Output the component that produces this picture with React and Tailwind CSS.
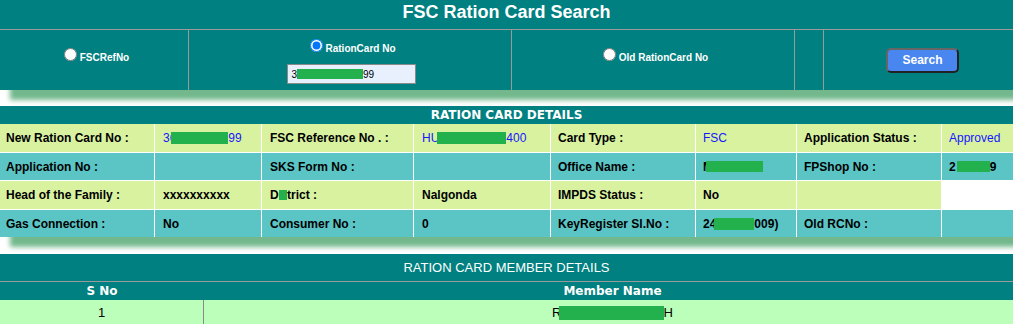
import React from "react";

const G = "bg-[#d8f2a0]";
const C = "bg-[#5bc5c6]";

function Cell({ bg, pad, children }) {
  return (
    <div className={`${bg} ${pad} flex items-center whitespace-nowrap text-[12px] text-black`}>
      {children}
    </div>
  );
}

function R({ className }) {
  return <span className={`inline-block bg-[#22b14c] align-middle ${className}`} />;
}

const P = ["pl-[6px]", "pl-[8px]", "pl-[8px]", "pl-[8px]", "pl-[7px]", "pl-[7px]", "pl-[7px]", "pl-[7px]"];

function Label({ children }) {
  return <span className="font-bold">{children}</span>;
}
function Blue({ children }) {
  return <span className="text-[#1616ff]">{children}</span>;
}
function Val({ children }) {
  return <span className="font-bold">{children}</span>;
}

export default function App() {
  return (
    <div className="w-[1013px] h-[324px] overflow-hidden bg-white font-['Liberation_Sans',Arial,sans-serif]">
      {/* Search panel */}
      <div className="bg-[#008080] shadow-[10px_10px_5px_#72b88c]">
        <div className="h-[30px] border-b border-[#9a9a9a] pt-[3px] text-center text-[18px] leading-[18px] font-bold text-white">
          FSC Ration Card Search
        </div>
        <div className="grid h-[60px] grid-cols-[189px_323px_283px_29px_189px] text-[10px] font-bold text-white">
          <div className="border-r border-[#9a9a9a] pt-[15px] text-center">
            <div className="leading-[12px]">
              <input type="radio" name="st" className="mt-[3px] mr-[3px] ml-[5px] h-[13px] w-[13px] align-baseline" />
              FSCRefNo
            </div>
          </div>
          <div className="flex flex-col items-center border-r border-[#9a9a9a] pt-[6px]">
            <div className="leading-[12px]">
              <input type="radio" name="st" defaultChecked className="mt-[3px] mr-[3px] ml-[5px] h-[13px] w-[13px] align-baseline" />
              RationCard No
            </div>
            <div className="mt-[9px] ml-[2px] flex h-[20px] w-[129px] items-center border border-[#8a8a8a] bg-[#e8f0fe] pl-[4px] text-[10px] font-normal text-black">
              3<R className="h-[10px] w-[66px]" />99
            </div>
          </div>
          <div className="border-r border-[#9a9a9a] pt-[15px] text-center">
            <div className="leading-[12px]">
              <input type="radio" name="st" className="mt-[3px] mr-[3px] ml-[5px] h-[13px] w-[13px] align-baseline" />
              Old RationCard No
            </div>
          </div>
          <div className="border-r border-[#9a9a9a]" />
          <div className="flex items-center justify-center pl-[8px]">
            <button className="h-[25px] w-[73px] rounded-[5px] border-2 border-[#666] border-r-[#222] border-b-[#222] bg-[#4a86f0] text-[12px] font-bold text-white">
              Search
            </button>
          </div>
        </div>
      </div>

      {/* Ration card details */}
      <div className="mt-[16px] bg-white shadow-[10px_10px_5px_#72b88c]">
        <div className="flex h-[18px] items-center justify-center bg-[#008080] font-['DejaVu_Sans',Verdana,sans-serif] text-[12px] font-bold text-white">
          RATION CARD DETAILS
        </div>
        <div className="grid grid-cols-[154px_106px_151px_136px_144px_100px_144px_71px] grid-rows-[28px_27px_28px_27px] gap-px bg-white">
          {/* row 1 */}
          <Cell bg={G} pad={P[0]}><Label>New Ration Card No :</Label></Cell>
          <Cell bg={G} pad={P[1]}><Blue>36</Blue><R className="ml-[-5px] h-[12px] w-[57px]" /><Blue>99</Blue></Cell>
          <Cell bg={G} pad={P[2]}><Label>FSC Reference No . :</Label></Cell>
          <Cell bg={G} pad={P[3]}><Blue>HU</Blue><R className="ml-[-2px] h-[12px] w-[69px]" /><Blue>400</Blue></Cell>
          <Cell bg={G} pad={P[4]}><Label>Card Type :</Label></Cell>
          <Cell bg={G} pad={P[5]}><Blue>FSC</Blue></Cell>
          <Cell bg={G} pad={P[6]}><Label>Application Status :</Label></Cell>
          <Cell bg={G} pad={P[7]}><Blue>Approved</Blue></Cell>
          {/* row 2 */}
          <Cell bg={C} pad={P[0]}><Label>Application No :</Label></Cell>
          <Cell bg={C} pad={P[1]} />
          <Cell bg={C} pad={P[2]}><Label>SKS Form No :</Label></Cell>
          <Cell bg={C} pad={P[3]} />
          <Cell bg={C} pad={P[4]}><Label>Office Name :</Label></Cell>
          <Cell bg={C} pad={P[5]}><Val>M</Val><R className="ml-[-7px] h-[11px] w-[57px]" /></Cell>
          <Cell bg={C} pad={P[6]}><Label>FPShop No :</Label></Cell>
          <Cell bg={C} pad={P[7]}><Val>2</Val><R className="ml-[1px] h-[11px] w-[33px]" /><Val>9</Val></Cell>
          {/* row 3 */}
          <Cell bg={G} pad={P[0]}><Label>Head of the Family :</Label></Cell>
          <Cell bg={G} pad={P[1]}><Val>xxxxxxxxxx</Val></Cell>
          <Cell bg={G} pad={P[2]}><Label>Di</Label><R className="ml-[-3px] h-[10px] w-[8px]" /><Label>trict :</Label></Cell>
          <Cell bg={G} pad={P[3]}><Val>Nalgonda</Val></Cell>
          <Cell bg={G} pad={P[4]}><Label>IMPDS Status :</Label></Cell>
          <Cell bg={G} pad={P[5]}><Val>No</Val></Cell>
          <Cell bg={G} pad={P[6]} />
          <Cell bg="bg-white" pad={P[7]} />
          {/* row 4 */}
          <Cell bg={C} pad={P[0]}><Label>Gas Connection :</Label></Cell>
          <Cell bg={C} pad={P[1]}><Val>No</Val></Cell>
          <Cell bg={C} pad={P[2]}><Label>Consumer No :</Label></Cell>
          <Cell bg={C} pad={P[3]}><Val>0</Val></Cell>
          <Cell bg={C} pad={P[4]}><Label>KeyRegister Sl.No :</Label></Cell>
          <Cell bg={C} pad={P[5]}><Val>24</Val><R className="ml-[-2px] h-[12px] w-[40px]" /><Val>009)</Val></Cell>
          <Cell bg={C} pad={P[6]}><Label>Old RCNo :</Label></Cell>
          <Cell bg={C} pad={P[7]} />
        </div>
      </div>

      {/* Member details */}
      <div className="mt-[17px]">
        <div className="flex h-[28px] items-center justify-center border-b border-[#9a9a9a] bg-[#008080] text-[13px] text-white">
          RATION CARD MEMBER DETAILS
        </div>
        <div className="grid h-[18px] grid-cols-[204px_1fr] bg-[#008080] font-['DejaVu_Sans',Verdana,sans-serif] text-[12px] font-bold text-white">
          <div className="flex items-center justify-center">S No</div>
          <div className="flex items-center justify-center pl-[8px]">Member Name</div>
        </div>
        <div className="grid h-[25px] grid-cols-[204px_1fr] bg-[#bbffbb] text-[13px] text-black">
          <div className="flex items-center justify-center border-r border-[#8a8a8a]">1</div>
          <div className="flex items-center justify-center pl-[8px]">
            R<R className="ml-[-3px] h-[14px] w-[105px]" />H
          </div>
        </div>
      </div>
    </div>
  );
}
